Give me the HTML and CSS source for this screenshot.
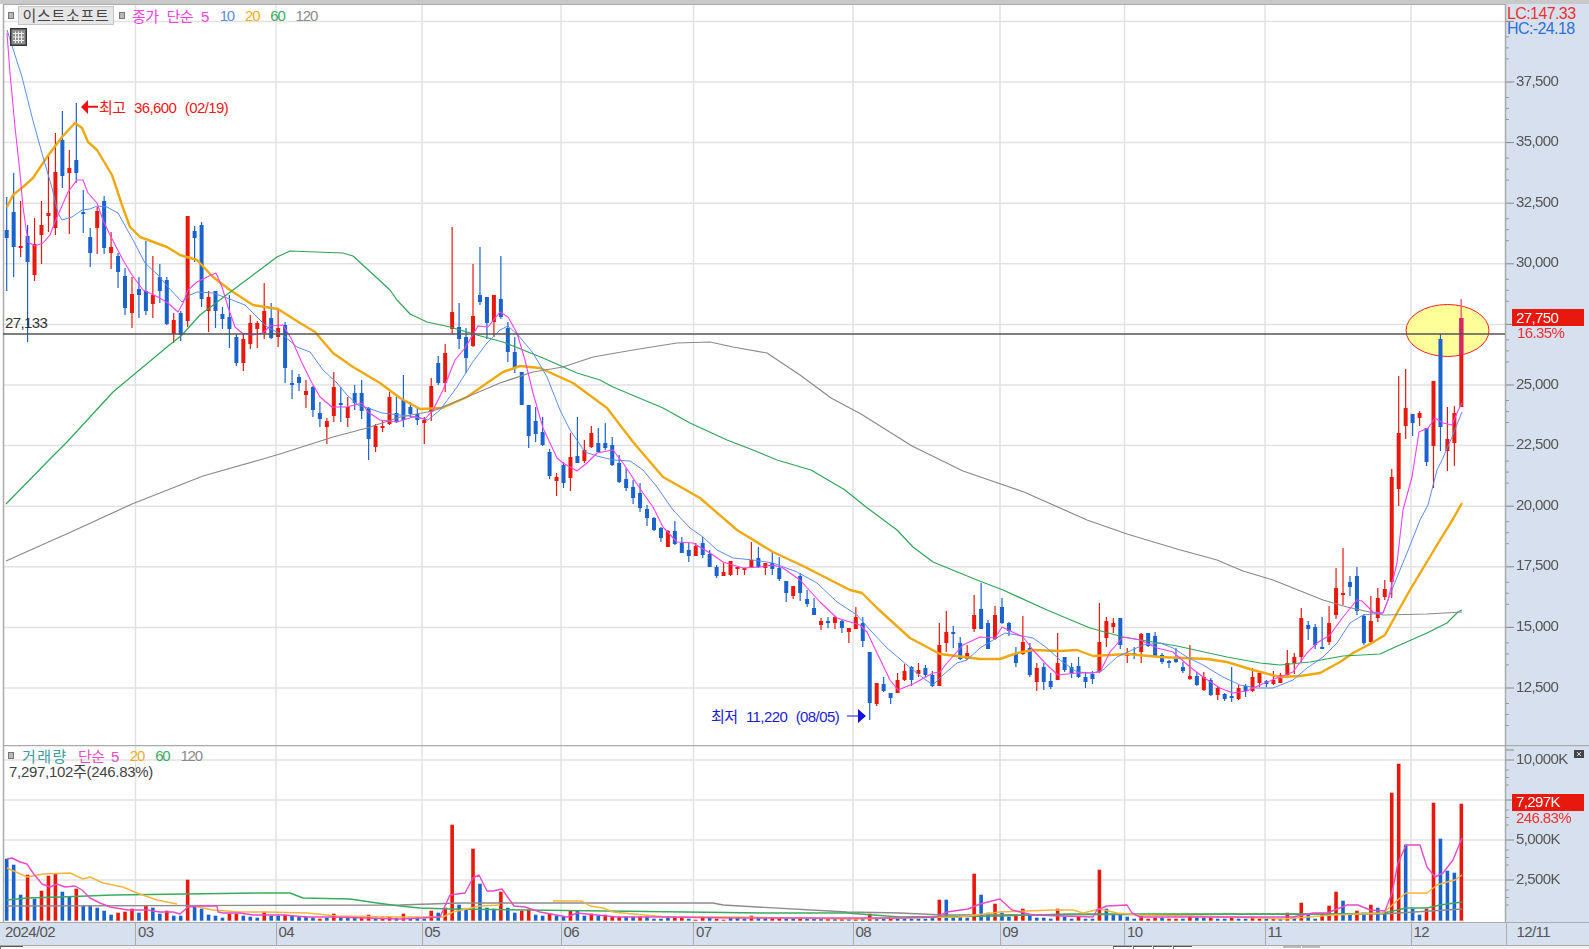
FILE: index.html
```html
<!DOCTYPE html>
<html lang="ko">
<head>
  <meta charset="UTF-8">
  <title>이스트소프트 일봉 차트</title>
  <link rel="stylesheet" href="styles.css">
</head>
<body>
  <div class="top-strip"></div>

  <div class="pane pane-price">
    <svg id="price-chart" class="chart" viewBox="0 4 1589 741"></svg>

    <div class="legend legend-price">
      <span class="bullet"></span>
      <span class="stock-name">이스트소프트</span>
      <span class="bullet"></span>
      <span class="c-ma5 ma-name">종가 단순 5</span>
      <span class="c-ma10 period">10</span>
      <span class="c-ma20 period">20</span>
      <span class="c-ma60 period">60</span>
      <span class="c-ma120 period">120</span>
    </div>

    <div class="table-btn">
      <svg viewBox="0 0 17 18" width="17" height="18">
        <rect x="0.75" y="0.75" width="15.5" height="16.5" fill="#8f8f8f" stroke="#333" stroke-width="1.5"/>
        <path d="M3 5.5H14 M3 9H14 M3 12.5H14 M5.5 3.5V15 M8.5 3.5V15 M11.5 3.5V15" stroke="#eee" stroke-width="1" fill="none"/>
      </svg>
    </div>

    <div class="note note-high">
      <svg viewBox="0 0 17 14" width="17" height="14"><path d="M0 7L7 0V5.8H17V7.8H7V14Z" fill="#f01010"/></svg>
      <span>최고 36,600 (02/19)</span>
    </div>
    <div class="note note-low">
      <span>최저 11,220 (08/05)</span>
      <svg viewBox="0 0 19 14" width="19" height="14"><path d="M0 6.4H11V0L19 7L11 14V7.6H0Z" fill="#1414d8"/></svg>
    </div>
    <div class="base-price">27,133</div>

    <div class="range-info">
      <div class="lc">LC:147.33</div>
      <div class="hc">HC:-24.18</div>
    </div>
  </div>

  <div class="pane pane-volume">
    <svg id="volume-chart" class="chart" viewBox="0 745 1589 177"></svg>

    <div class="legend legend-volume">
      <span class="bullet"></span>
      <span class="vol-name">거래량</span>
      <span class="c-ma5b ma-name">단순 5</span>
      <span class="c-ma20 period">20</span>
      <span class="c-ma60 period">60</span>
      <span class="c-ma120 period">120</span>
    </div>
    <div class="volume-info">7,297,102주(246.83%)</div>

    <div class="close-btn">
      <svg viewBox="0 0 10 8" width="10" height="8">
        <rect width="10" height="8" fill="#444"/>
        <path d="M3 2L7 6 M7 2L3 6" stroke="#ddd" stroke-width="1"/>
      </svg>
    </div>
  </div>

  <div class="months">
    <div class="month">2024/02</div>
    <div class="month">03</div>
    <div class="month">04</div>
    <div class="month">05</div>
    <div class="month">06</div>
    <div class="month">07</div>
    <div class="month">08</div>
    <div class="month">09</div>
    <div class="month">10</div>
    <div class="month">11</div>
    <div class="month">12</div>
    <div class="month last">12/11</div>
  </div>

  <div class="toolbar">
    <span class="tool tool-first"></span>
    <span class="tool-gap"></span>
    <span class="tool"></span>
    <span class="tool"></span>
    <span class="tool"></span>
    <span class="tool"></span>
    <span class="tool-gap2"></span>
    <span class="tool tool-flat"></span>
    <span class="tool tool-flat"></span>
  </div>

  <script src="chart.js"></script>
</body>
</html>
```

FILE: styles.css
```css
html, body {
  margin: 0;
  padding: 0;
}
body {
  width: 1589px;
  height: 949px;
  overflow: hidden;
  background: #fff;
  font-family: "Liberation Sans", "Noto Sans CJK KR", sans-serif;
  color: #444;
}
.top-strip {
  height: 4px;
  background: #c9c9c9;
}
.pane {
  position: relative;
}
.pane-price {
  height: 741px;
}
.pane-volume {
  height: 177px;
}
.chart {
  display: block;
  width: 1589px;
  height: 100%;
  filter: blur(0.35px);
}
.chart text {
  font-family: "Liberation Sans", sans-serif;
  font-size: 15px;
  letter-spacing: -0.6px;
  fill: #555;
}
.chart .tag-value {
  fill: #fff;
}
.chart .tag-rate {
  fill: #f03030;
}

/* legends over the panes */
.legend {
  position: absolute;
  left: 8px;
  display: flex;
  align-items: center;
  gap: 11px;
  font-size: 15px;
  letter-spacing: -0.6px;
  white-space: nowrap;
}
.legend-price {
  top: 2px;
  height: 19px;
}
.legend-volume {
  top: 1px;
  height: 18px;
}
.bullet {
  width: 4px;
  height: 5px;
  background: #b8b8b8;
  border: 1px solid #777;
}
.legend-price .bullet {
  margin-right: -9px;
}
.legend-volume .bullet {
  margin-right: -3px;
}
.stock-name {
  margin-left: 1.5px;
  padding: 0 3px 0 4px;
  height: 17px;
  line-height: 17px;
  background: #e6e6e6;
  border: 1px solid #c4c4c4;
  color: #444;
  letter-spacing: 0.7px;
}
.stock-name + .bullet {
  margin-left: -6px;
}
.ma-name {
  margin-left: 5.5px;
  word-spacing: 4.5px;
}
.period {
  letter-spacing: -1.2px;
}
.vol-name {
  color: #3d9c9c;
  letter-spacing: 1.4px;
}
.legend-volume .ma-name {
  margin-left: -0.5px;
  word-spacing: 3px;
}
.c-ma5 { color: #f53fe6; }
.c-ma5b { color: #ea4cc8; }
.c-ma10 { color: #5b8cf0; }
.c-ma20 { color: #eeae22; }
.c-ma60 { color: #3aaa5e; }
.c-ma120 { color: #8a8a8a; }

.table-btn {
  position: absolute;
  left: 10px;
  top: 24px;
  height: 18px;
  line-height: 0;
}
.note {
  position: absolute;
  display: flex;
  align-items: center;
  gap: 1px;
  font-size: 15px;
  letter-spacing: -0.6px;
  word-spacing: 5px;
  white-space: nowrap;
}
.note-high {
  left: 81px;
  top: 92px;
  color: #f01818;
}
.note-low {
  left: 711px;
  top: 701px;
  color: #1c1cd0;
  gap: 8px;
}
.base-price {
  position: absolute;
  left: 5px;
  top: 310px;
  font-size: 15px;
  letter-spacing: -0.6px;
  color: #333;
}
.range-info {
  position: absolute;
  left: 1507px;
  top: 2px;
  font-size: 16px;
  line-height: 15px;
  letter-spacing: -0.6px;
}
.lc { color: #f03030; }
.hc { color: #2e6fd8; }

.volume-info {
  position: absolute;
  left: 9px;
  top: 15px;
  font-size: 15px;
  letter-spacing: -0.3px;
  color: #444;
}
.close-btn {
  position: absolute;
  left: 1574px;
  top: 5px;
  line-height: 0;
}

/* month axis along the bottom */
.months {
  display: grid;
  grid-template-columns: 136px 140.5px 146px 139px 132.5px 159.5px 147px 124.5px 140.5px 146px 95px 1fr;
  background: #d6e0ee;
  border-top: 1.5px solid #aaa;
  border-bottom: 1.5px solid #aaa;
  box-sizing: border-box;
  height: 24px;
}
.month {
  padding-left: 2px;
  line-height: 18px;
  font-size: 15px;
  letter-spacing: -0.6px;
  color: #555;
  border-right: 1.5px solid #aaa;
}
.month:first-child {
  padding-left: 5px;
}
.month.last {
  padding-left: 10px;
  border-right: 0;
}

/* what is left of the toolbar under the chart */
.toolbar {
  display: flex;
  height: 4px;
  background: #f2f2f2;
}
.tool {
  width: 18px;
  margin-right: 1px;
  border-top: 1px solid #555;
  border-left: 1px solid #777;
  background: #fff;
}
.tool-first {
  width: 22px;
}
.tool-gap {
  width: 1089px;
}
.tool-gap2 {
  width: 90px;
}
.tool-flat {
  border: 0;
  border-top: 2px solid #bbb;
}
```

FILE: chart.js
```js
// y values are screen pixels, read straight off the chart
const RED = '#e8190c';
const BLUE = '#1a62cc';

const barX = i => 6.7 + 6.96 * i;

// colour (1 = up), high, body top, body bottom, low
const candles = [
  [0,197,230,238,291],[0,173,212,247,277],[1,201,246,248,257],[0,225,236,262,342],[1,218,244,275,281],
  [1,201,225,235,264],[1,155,213,216,232],[1,133,172,228,235],[0,111,140,176,188],[1,150,168,173,234],
  [0,103,160,173,183],[0,190,212,214,233],[0,228,237,253,267],[1,207,211,228,254],[0,196,201,248,254],
  [1,232,247,253,269],[0,253,256,272,288],[0,268,276,308,315],[1,277,294,313,328],[0,277,289,295,318],
  [0,241,291,311,315],[1,256,295,304,318],[0,264,277,291,303],[0,277,280,324,325],[1,313,320,334,343],
  [0,311,313,335,341],[1,216,216,321,327],[0,226,231,238,262],[0,222,225,299,307],[1,291,297,311,332],
  [0,291,291,311,328],[0,307,314,319,329],[0,295,317,329,348],[0,334,337,363,366],[1,334,339,363,371],
  [1,315,323,344,349],[1,321,323,329,348],[1,283,311,333,339],[0,303,318,338,339],[1,308,328,337,347],
  [0,322,325,368,383],[0,370,383,385,399],[0,374,377,383,391],[1,380,391,395,408],[0,386,387,410,417],
  [0,402,413,419,427],[1,418,421,427,444],[1,372,387,416,422],[0,387,403,405,422],[1,397,407,418,427],
  [0,385,393,403,410],[0,380,393,411,419],[0,407,408,439,460],[1,424,426,447,452],[1,420,426,428,432],
  [1,392,397,424,425],[0,397,413,422,423],[0,375,400,420,427],[0,402,407,414,417],[0,407,414,420,425],
  [1,417,420,423,444],[1,378,386,412,421],[0,356,363,383,385],[1,344,353,383,392],[1,227,312,329,335],
  [0,303,327,339,349],[0,328,337,358,373],[1,264,316,346,347],[0,247,295,302,305],[0,297,297,323,339],
  [1,295,295,322,337],[0,256,299,317,319],[0,322,328,352,362],[0,337,352,368,373],[0,372,372,405,405],
  [0,405,405,436,448],[0,407,421,434,442],[0,417,432,445,446],[0,449,452,476,479],[1,473,477,481,496],
  [0,462,465,483,488],[1,433,457,478,491],[0,417,456,463,463],[1,440,450,461,463],[1,426,433,447,448],
  [0,428,443,452,452],[0,423,443,448,450],[0,437,445,465,466],[0,455,463,482,483],[0,468,479,488,491],
  [0,480,487,498,504],[0,483,493,508,512],[0,505,509,518,526],[0,517,518,530,531],[0,527,528,538,542],
  [1,530,531,547,547],[0,521,531,544,545],[0,537,543,553,553],[0,543,550,556,562],[1,543,546,556,556],
  [0,537,543,555,558],[0,550,554,567,567],[0,565,567,576,578],[1,563,572,576,576],[1,561,561,575,576],
  [1,567,567,568,575],[1,568,568,570,575],[1,542,560,567,568],[0,547,558,567,568],[1,563,563,568,575],
  [0,551,563,569,575],[0,557,568,579,581],[0,581,581,593,602],[1,586,586,596,599],[0,573,576,593,601],
  [0,590,599,604,607],[0,598,608,615,615],[1,618,621,625,630],[0,617,621,623,628],[1,616,617,623,629],
  [0,620,621,628,633],[1,628,628,632,643],[1,607,617,629,629],[0,617,623,641,647],[0,652,652,703,720],
  [1,683,683,704,706],[0,677,684,691,692],[0,693,693,698,704],[1,673,680,693,693],[1,664,671,680,681],
  [0,666,667,680,686],[1,663,670,674,677],[0,665,668,675,677],[0,671,675,686,687],[1,623,645,686,686],
  [1,611,632,643,652],[0,626,632,634,648],[0,637,643,659,660],[1,645,653,659,660],[1,595,615,629,632],
  [0,583,609,629,629],[0,620,623,649,649],[1,606,615,639,640],[0,598,607,623,624],[0,622,623,631,636],
  [0,647,653,663,667],[1,616,642,654,655],[0,643,648,675,677],[1,663,668,682,691],[0,663,667,682,690],
  [0,673,681,687,689],[1,633,663,680,680],[0,657,657,670,672],[0,663,667,673,678],[0,657,666,677,678],
  [0,672,677,682,688],[0,671,674,679,684],[1,603,642,672,673],[1,617,621,638,647],[1,618,623,627,633],
  [0,618,618,645,649],[1,648,653,656,663],[0,647,653,655,659],[1,633,634,652,663],[0,633,633,646,647],
  [0,632,636,656,657],[0,653,655,662,664],[0,660,661,662,668],[0,648,657,662,663],[0,662,667,671,673],
  [1,645,676,679,680],[0,672,676,685,686],[1,672,677,690,691],[0,678,680,695,696],[1,687,688,695,700],
  [0,693,694,699,701],[0,667,696,697,702],[1,685,688,699,700],[0,684,686,691,697],[1,668,677,691,692],
  [1,672,673,683,687],[0,680,681,684,687],[1,671,680,684,685],[1,673,675,683,683],[1,650,663,675,677],
  [1,653,657,663,674],[1,608,618,657,662],[0,621,625,629,640],[0,624,627,645,649],[0,617,647,649,649],
  [1,606,623,642,645],[1,568,588,615,619],[1,548,593,595,605],[0,576,582,587,596],[0,567,576,611,615],
  [0,614,616,643,645],[1,596,621,642,643],[1,588,598,618,622],[1,580,589,597,600],[1,469,477,582,598],
  [1,376,433,489,506],[1,369,408,426,439],[0,414,414,423,436],[1,411,413,418,426],[0,428,428,462,466],
  [1,381,381,446,488],[0,334,339,427,451],[1,407,439,451,471],[1,406,413,443,466],[1,299,318,407,407]
];

const priceLines = [
  { color: '#efa810', width: 2.4, points: '7,207 13,195 23,187 33,178 47,157 62,137 75,123 82,128 88,142 97,150 112,175 123,208 130,227 140,237 167,247 180,255 197,260 213,277 230,290 253,305 278,309 300,323 315,332 333,353 353,367 380,383 400,398 420,409 442,408 467,397 487,383 503,372 520,366 540,368 573,383 607,408 633,442 663,477 700,498 737,530 773,552 803,566 850,590 862,593 877,608 910,638 940,654 980,659 1000,659 1017,653 1033,650 1060,651 1077,650 1093,656 1127,654 1160,657 1207,659 1227,662 1253,670 1280,677 1300,676 1320,673 1340,662 1353,653 1370,644 1385,635 1397,613 1410,590 1422,570 1437,545 1453,519 1462,503' },
  { color: '#2fa556', width: 1.2, points: '6,504 50,459 67,442 113,392 167,347 182,335 200,315 233,290 277,257 290,251 343,253 353,256 377,278 390,290 397,300 410,314 427,322 450,327 477,335 503,342 543,358 577,373 600,380 613,387 663,408 690,423 727,440 753,450 777,460 811,470 845,490 866,507 897,530 913,547 933,562 977,580 1003,590 1047,610 1090,628 1123,637 1177,646 1227,657 1260,663 1280,665 1310,662 1343,656 1380,654 1393,648 1427,633 1447,623 1458,612 1462,610' },
  { color: '#8a8a8a', width: 1.2, points: '6,561 35,548 71,532 132,504 203,476 263,459 283,453 333,437 367,428 400,417 433,411 467,397 500,383 533,372 563,367 593,357 633,350 677,343 710,342 733,347 767,353 800,375 831,398 861,414 912,446 963,471 1024,492 1087,520 1127,534 1177,549 1217,560 1243,571 1273,580 1293,588 1323,600 1347,607 1383,615 1427,614 1462,612' },
  { color: '#5b8cf0', width: 1, points: '7,30 22,77 32,117 43,157 52,188 58,213 62,220 72,217 82,210 90,209 97,206 107,207 118,213 133,240 145,263 158,275 168,287 182,302 190,295 197,292 213,293 227,298 245,305 257,317 267,327 283,335 297,347 310,352 323,370 337,383 347,395 358,405 368,408 382,413 400,415 417,417 428,420 440,410 457,387 472,363 487,343 500,330 508,326 518,335 533,353 547,377 560,410 570,430 585,452 597,456 613,460 630,461 643,470 657,487 673,510 690,528 703,537 717,550 733,558 753,560 773,563 797,572 817,583 837,602 857,615 870,630 887,648 907,665 923,678 933,685 943,675 957,663 967,660 980,648 993,640 1005,633 1017,635 1033,638 1047,648 1060,660 1077,672 1093,673 1103,670 1117,657 1130,651 1143,645 1160,643 1173,648 1187,657 1203,665 1223,677 1240,685 1257,688 1273,688 1293,680 1307,668 1323,657 1337,643 1350,623 1363,615 1383,613 1393,587 1407,553 1420,520 1428,505 1437,470 1442,460 1452,437 1462,412' },
  { color: '#f93ff0', width: 1.1, points: '7,33 10,73 15,127 20,173 23,207 28,242 35,246 43,243 50,235 53,227 55,222 68,192 77,180 83,180 88,193 97,203 103,220 110,235 123,260 132,275 143,290 158,297 168,303 178,312 183,303 188,290 197,282 207,277 216,273 222,287 228,307 235,327 242,333 253,335 263,333 270,326 283,325 292,340 302,363 312,383 320,397 332,407 347,407 362,403 368,412 380,420 397,422 413,417 425,419 433,410 443,390 455,360 465,348 478,326 488,327 500,312 508,317 517,333 525,360 533,393 543,428 557,458 563,463 577,471 587,463 597,453 613,450 623,463 633,478 643,493 653,507 663,527 677,542 693,543 710,553 723,562 743,568 760,567 773,565 783,568 800,580 820,602 837,618 860,625 867,632 877,653 890,680 898,690 913,684 933,673 940,672 947,663 963,645 980,637 995,638 1002,627 1023,637 1033,650 1047,665 1058,675 1077,673 1090,673 1100,672 1110,652 1123,637 1140,640 1157,648 1173,652 1190,667 1203,677 1220,688 1233,693 1247,691 1260,685 1277,678 1293,672 1307,653 1317,643 1330,635 1343,617 1357,600 1362,601 1373,612 1383,613 1388,600 1397,563 1403,510 1412,477 1419,432 1428,428 1435,418 1443,423 1452,425 1457,413 1462,403' }
];

// volume bars: r/b + height in px
const volumes = ('b62 b56 b26 r46 b22 r30 r45 r47 b29 b24 r32 b15 b15 b13 b10 b6 r8 r9 r12 b8 r15 b13 b7 r10 b5 b5 r41 b15 b12 b6 ' +
  'b5 b3 r7 r7 b5 b4 b3 r9 b5 b5 r6 b5 b4 b4 b3 r2 b3 r7 b3 b3 b3 r3 r6 b3 r3 r4 b3 ' +
  'r7 b3 b3 b2 r10 b8 r13 r96 b16 b12 r72 b37 b13 b12 r29 b13 b8 r10 r11 b6 b5 r7 b5 b4 r10 b10 b5 r7 b5 r6 r4 r4 b4 b4 r4 b4 ' +
  'b2 b2 b3 r3 r3 b2 r1 r3 b3 r2 r1 b3 b3 b2 r5 b3 b3 r3 r3 ' +
  'b2 b2 r2 b2 b2 b2 r2 b2 r2 b2 r2 b2 r7 b3 b3 r3 b2 b2 b2 b2 b2 b3 ' +
  'r21 b21 b4 b4 b3 r47 b26 b8 r17 b8 b4 r6 r12 b6 b3 b3 b2 r12 b4 b2 r4 b2 b2 r51 b12 b6 b6 b4 b2 ' +
  'r5 r2 r3 b3 r2 r2 b2 r5 b3 b3 r3 b2 b2 r3 b2 b2 r4 r2 b2 r2 b2 r8 b3 r18 b6 b2 r6 r15 r29 b20 ' +
  'b6 r10 b8 r16 b13 b8 r128 r157 b76 b12 b6 r12 r118 b82 b50 b48 r117').split(' ');

const volumeLines = [
  { color: '#8c8c8c', points: '7,906 400,905 460,903 713,903 723,905 847,912 900,913 943,915 1383,914 1462,909' },
  { color: '#3aaa5e', points: '7,900 27,898 60,897 87,896 113,895 260,893 290,893 303,898 350,899 377,903 400,906 420,908 450,909 607,911 763,913 847,913 900,917 1000,916 1067,914 1333,914 1383,913 1393,911 1406,908 1427,908 1440,905 1462,902' },
  { color: '#f6b53c', points: '7,868 27,877 43,874 70,873 83,879 90,877 103,883 123,887 137,893 157,900 177,904' },
  { color: '#f6b53c', points: '193,906 213,910 240,912 267,912 307,913 337,916 400,917 443,917 453,912 480,906 500,905' },
  { color: '#f6b53c', points: '553,901 582,901 590,906 603,908 613,912 633,914 667,917 733,917 853,919 900,918 960,917 1000,912 1053,910 1073,910 1083,913 1100,909 1117,913 1140,915 1233,917 1283,919 1333,915 1383,913 1390,907 1400,898 1406,893 1427,893 1437,885 1447,882 1455,880 1462,875' },
  { color: '#e84ac8', points: '7,859 12,858 20,862 27,864 33,873 42,884 50,887 57,884 65,887 75,886 82,890 90,898 100,903 110,907 128,910 147,910 160,912 173,912 180,914 188,907 197,906 217,906 218,912 223,913 240,913 253,915 283,915 307,917 333,917 400,919 440,917 450,895 465,893 473,878 479,875 487,891 493,891 502,889 514,906 525,907 540,912 567,917 577,913 597,915 617,917 667,917 733,918 900,918 937,917 947,912 968,909 980,904 1000,899 1012,910 1033,915 1093,917 1097,910 1107,906 1127,905 1132,913 1140,917 1293,917 1313,913 1327,913 1347,905 1358,905 1370,910 1385,911 1392,893 1398,863 1406,845 1420,845 1427,867 1435,877 1443,873 1453,860 1462,838' }
];

const monthLines = [135.5, 276, 422, 561, 693.5, 853, 1000, 1124.5, 1265, 1411];

// 27,500 sits under the price tag, so it only gets its tick
const priceTicks = [
  [21.4, ''], [82, '37,500'], [142.6, '35,000'], [203.2, '32,500'], [263.8, '30,000'], [324.4, ''],
  [385, '25,000'], [445.6, '22,500'], [506.2, '20,000'], [566.8, '17,500'], [627.4, '15,000'], [688, '12,500']
];
const volumeTicks = [[760, '10,000K'], [800, '7,500K'], [840, '5,000K'], [880, '2,500K']];

function rect(x, y, w, h, fill) {
  return `<rect x="${x}" y="${y}" width="${w}" height="${h}" fill="${fill}"/>`;
}
function line(x1, y1, x2, y2, color, width) {
  return `<line x1="${x1}" y1="${y1}" x2="${x2}" y2="${y2}" stroke="${color}" stroke-width="${width}"/>`;
}
function polyline(points, color, width) {
  return `<polyline points="${points}" fill="none" stroke="${color}" stroke-width="${width}" stroke-linejoin="round"/>`;
}
function text(x, y, str, cls) {
  return `<text x="${x}" y="${y}" class="${cls || ''}">${str}</text>`;
}

// grid, borders and the blue axis column shared by both panes
function frame(top, bottom, ticks, minor) {
  let s = rect(1506, top, 83, bottom - top, '#d6e0ee');
  for (const [y] of ticks) s += line(3, y, 1505, y, '#e2e2e2', 1.5);
  for (const x of monthLines) s += line(x, top, x, bottom, '#e2e2e2', 1.5);
  s += line(3.5, top, 3.5, bottom, '#aaa', 1.5);
  s += line(1505.5, top, 1505.5, bottom, '#aaa', 1.5);
  for (const [y, label] of ticks) {
    s += line(1506, y, 1514, y, '#888', 1);
    if (label) s += text(1516, y + 3.5, label);
    for (const d of minor) s += line(1506, y + d, 1509, y + d, '#999', 1);
  }
  return s;
}

function drawPrice() {
  let s = frame(4, 745, priceTicks, [15.5, 26.5, 37.5]);
  s += line(3, 4.5, 1506, 4.5, '#aaa', 1);
  s += '<ellipse cx="1447.5" cy="330.5" rx="41.5" ry="26" fill="#ffff99" stroke="#f02020" stroke-width="1"/>';

  candles.forEach((c, i) => {
    const x = barX(i);
    const color = c[0] ? RED : BLUE;
    s += line(x, c[1], x, c[4], color, 1.2);
    s += rect(x - 2, c[2], 4, Math.max(c[3] - c[2], 2), color);
  });
  // the last candle shows through the yellow circle
  s += line(barX(209), 299, barX(209), 318, '#e8708a', 1.2);
  s += rect(barX(209) - 2, 318, 4, 37, '#d6246e');

  for (const l of priceLines) s += polyline(l.points, l.color, l.width);
  s += line(3, 334, 1505, 334, '#555', 1.5);

  s += rect(1512, 309, 72, 17, '#e8190c');
  s += text(1516, 322.5, '27,750', 'tag-value');
  s += text(1517, 337.5, '16.35%', 'tag-rate');
  document.getElementById('price-chart').innerHTML = s;
}

function drawVolume() {
  let s = frame(745, 922, volumeTicks, [10, 17.5, 25]);
  s += line(1506, 750, 1514, 750, '#888', 1);
  s += line(3, 745.5, 1589, 745.5, '#aaa', 1.5);

  volumes.forEach((v, i) => {
    const h = Number(v.slice(1));
    s += rect(barX(i) - 1.8, 920.7 - h, 3.6, h, v[0] === 'r' ? RED : BLUE);
  });
  for (const l of volumeLines) s += polyline(l.points, l.color, 1.4);

  s += rect(1512, 794, 72, 17, '#e8190c');
  s += text(1516, 807, '7,297K', 'tag-value');
  s += text(1516, 822.5, '246.83%', 'tag-rate');
  document.getElementById('volume-chart').innerHTML = s;
}

drawPrice();
drawVolume();
```
